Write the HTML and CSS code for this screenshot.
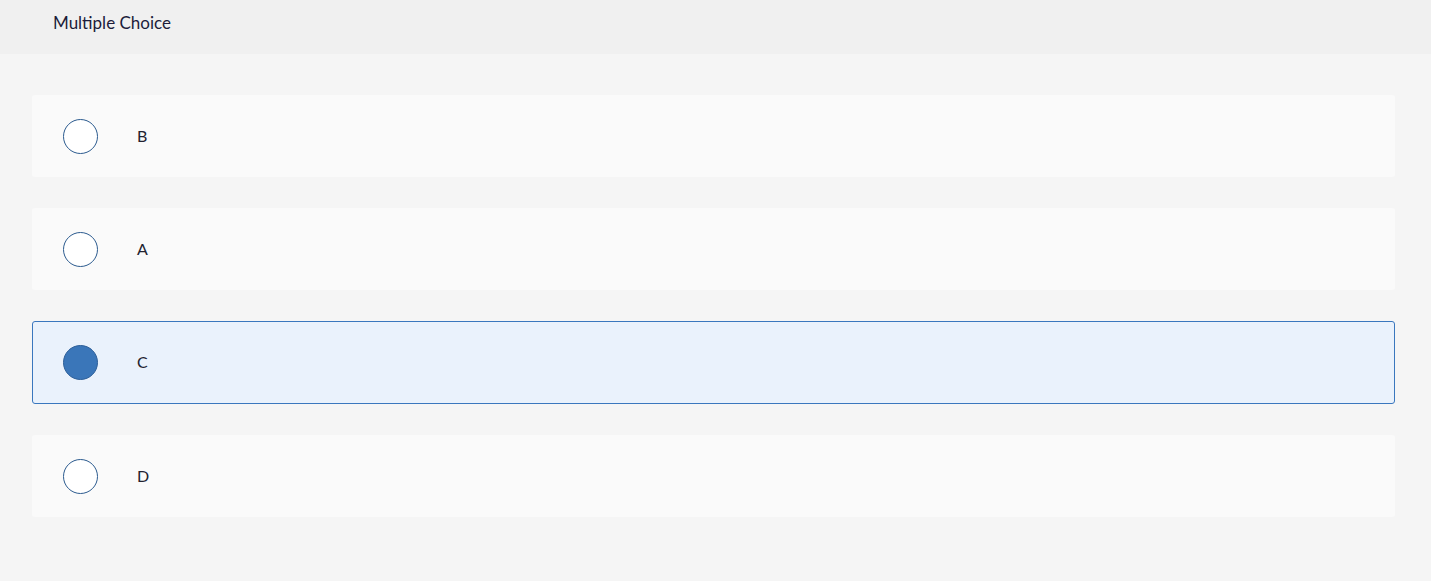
FILE: index.html
```html
<!DOCTYPE html>
<html>
<head>
<meta charset="utf-8">
<link rel="stylesheet" href="styles.css">
</head>
<body>
<header class="topbar"><span class="title">Multiple Choice</span></header>
<main class="choices">
  <div class="choice"><span class="radio"></span><span class="label">B</span></div>
  <div class="choice"><span class="radio"></span><span class="label">A</span></div>
  <div class="choice selected"><span class="radio"></span><span class="label">C</span></div>
  <div class="choice"><span class="radio"></span><span class="label">D</span></div>
</main>
</body>
</html>
```
FILE: styles.css
```css
html, body {
  margin: 0;
  padding: 0;
  background: #f5f5f5;
  font-family: Lato, "Open Sans", sans-serif;
  color: #1f1f2e;
}
.topbar {
  height: 54px;
  background: #f0f0f0;
  display: flex;
  align-items: center;
  padding-left: 53px;
  box-sizing: border-box;
}
.title {
  font-size: 17px;
  color: #1c1c3a;
  margin-top: -10px;
}
.choices {
  display: flex;
  flex-direction: column;
  gap: 31px;
  padding: 41px 36px 0 32px;
}
.choice {
  box-sizing: border-box;
  height: 82px;
  background: #fafafa;
  border: 1px solid transparent;
  border-radius: 3px;
  display: flex;
  align-items: center;
  padding-left: 30px;
}
.radio {
  width: 35px;
  height: 35px;
  box-sizing: border-box;
  border: 1px solid #2c5b8f;
  border-radius: 50%;
  background: #ffffff;
  flex: none;
}
.label {
  margin-left: 39px;
  margin-top: -2px;
  font-size: 16px;
  color: #222230;
}
.choice.selected {
  background: #eaf2fc;
  border-color: #3a77be;
  height: 83px;
}
.choice.selected .radio {
  background: #3a76b9;
  border-color: #2d5f99;
}
```
